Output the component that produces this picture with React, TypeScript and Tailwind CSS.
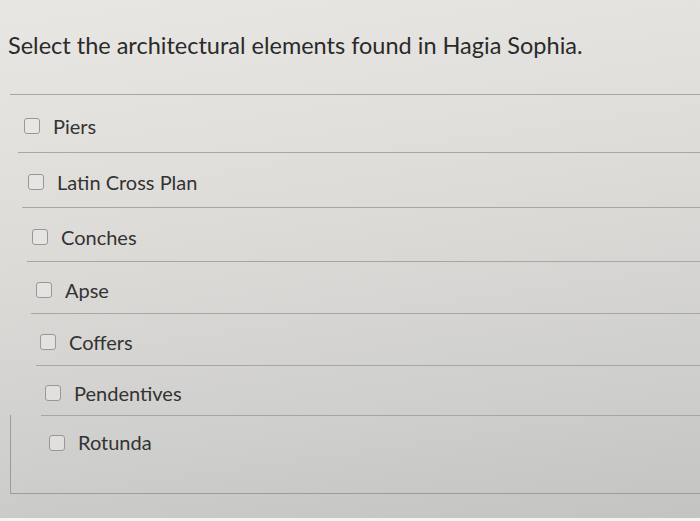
const options = [
  { label: 'Piers', row: 'ml-[10px] h-[58px] pl-[14px]' },
  { label: 'Latin Cross Plan', row: 'ml-[18px] h-[55px] pl-[10px]' },
  { label: 'Conches', row: 'ml-[22px] h-[54px] pl-[10px]' },
  { label: 'Apse', row: 'ml-[27px] h-[52px] pl-[9px]' },
  { label: 'Coffers', row: 'ml-[31px] h-[52px] pl-[9px]' },
  { label: 'Pendentives', row: 'ml-[36px] h-[50px] pl-[9px]' },
];

const Checkbox = () => (
  <span className="w-[16px] h-[16px] shrink-0 rounded-[3px] border-[1.5px] border-[#989895] bg-[#ebeae7]/60" />
);

const App = () => {
  return (
    <div
      className="w-[700px] h-[521px] overflow-hidden border-b-[3px] border-[#f4f4f4] bg-[linear-gradient(172deg,#e9e7e4_0%,#dedcd9_40%,#cfcfcd_75%,#c3c3c1_100%)]"
      style={{ fontFamily: 'Lato, "Open Sans", sans-serif' }}
    >
      {/* Question */}
      <h1 className="pt-[30px] pl-[8px] text-[23.5px] leading-[30px] text-[#2a2a2a]">
        Select the architectural elements found in Hagia Sophia.
      </h1>

      {/* Options */}
      <div className="mt-[34px]">
        {options.map((o) => (
          <div
            key={o.label}
            className={`flex items-center gap-[13px] pt-[4px] border-t border-[#a7a6a3] ${o.row}`}
          >
            <Checkbox />
            <span className="text-[20px] leading-[24px] text-[#333]">{o.label}</span>
          </div>
        ))}

        {/* Last option sits in the box bottom */}
        <div className="ml-[10px] border-l border-b border-[#9c9c99]">
          <div className="ml-[30px] h-[78px] flex items-start gap-[13px] pt-[19px] pl-[8px] border-t border-[#a7a6a3]">
            <Checkbox />
            <span className="text-[20px] leading-[24px] text-[#333] -mt-[5px]">Rotunda</span>
          </div>
        </div>
      </div>
    </div>
  );
};

export default App;
